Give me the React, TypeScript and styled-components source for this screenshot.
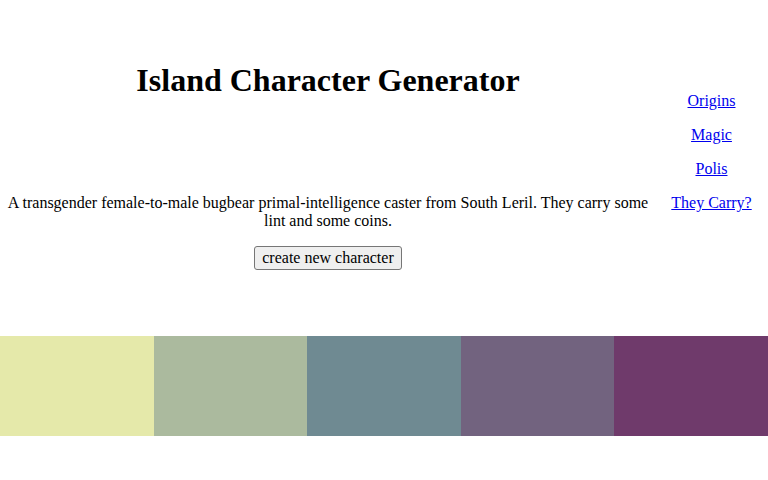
import React, { useState } from 'react';
import styled, { createGlobalStyle } from 'styled-components';

const GlobalStyle = createGlobalStyle`
  body {
    margin: 0;
    background: #ffffff;
    font-family: "Liberation Serif", "Times New Roman", serif;
    font-size: 16px;
    color: #000000;
  }
`;

const Page = styled.div`
  display: flex;
  flex-direction: column;
`;

const Top = styled.div`
  display: flex;
  gap: 8px;
  padding: 0 2px 0 7px;
  height: 336px;
`;

const Main = styled.main`
  width: 642px;
  text-align: center;
  padding-top: 41px;
`;

const Title = styled.h1`
  font-size: 32px;
  font-weight: bold;
  margin: 21px 0 95px;
`;

const Description = styled.p`
  margin: 0 0 16px;
`;

const Button = styled.button`
  font-family: "Liberation Serif", "Times New Roman", serif;
  font-size: 16px;
  color: #000000;
  background: #efefef;
  border: 1px solid #767676;
  border-radius: 3px;
  padding: 2px 7px;
  cursor: pointer;
`;

const Sidebar = styled.nav`
  flex: 1;
  text-align: center;
  padding-top: 76px;
`;

const NavItem = styled.p`
  margin: 16px 0;
`;

const NavLink = styled.a`
  color: #0000ee;
  text-decoration: underline;
`;

const Palette = styled.div`
  display: flex;
  height: 100px;
`;

const Swatch = styled.div<{ $color: string }>`
  flex: 1;
  background: ${(p) => p.$color};
`;

const colors = ['#e5e9aa', '#abba9e', '#6f8a92', '#72637f', '#6f3a6b'];
const links = ['Origins', 'Magic', 'Polis', 'They Carry?'];

const App: React.FC = () => {
  const [text] = useState(
    'A transgender female-to-male bugbear primal-intelligence caster from South Leril. They carry some lint and some coins.'
  );

  return (
    <Page>
      <GlobalStyle />
      <Top>
        <Main>
          <Title>Island Character Generator</Title>
          <Description>{text}</Description>
          <Button>create new character</Button>
        </Main>
        <Sidebar>
          {links.map((l) => (
            <NavItem key={l}>
              <NavLink href="#">{l}</NavLink>
            </NavItem>
          ))}
        </Sidebar>
      </Top>
      <Palette>
        {colors.map((c) => (
          <Swatch key={c} $color={c} />
        ))}
      </Palette>
    </Page>
  );
};

export default App;
